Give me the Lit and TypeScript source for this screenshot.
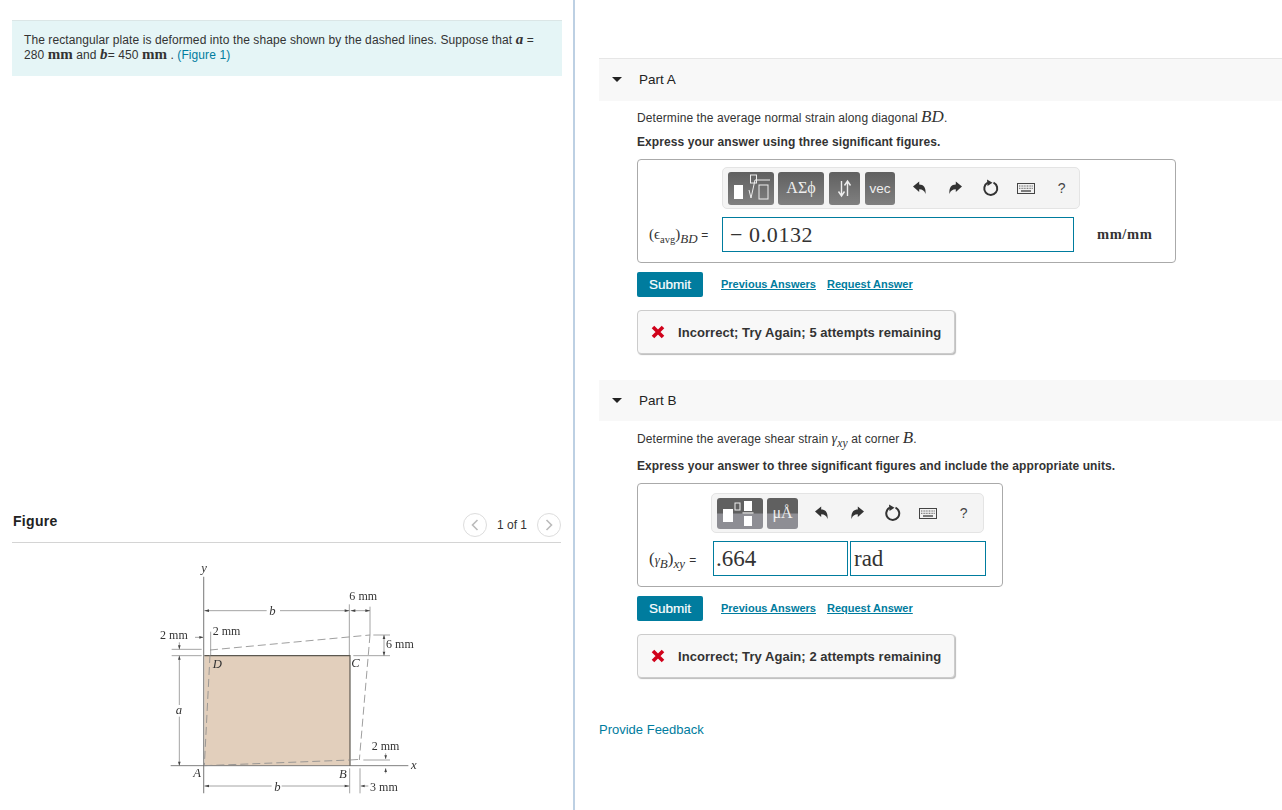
import { LitElement, html, css, svg } from 'lit';
import { customElement } from 'lit/decorators.js';

const undoIcon = html`<svg class="ic" viewBox="0 0 16 16"><path d="M1 6.500 7.200 1.500v3c4.300 0 7 3 6.300 9.500-1-3.200-3-4.700-6.300-4.700v2.700z"/></svg>`;
const redoIcon = html`<svg class="ic flip" viewBox="0 0 16 16"><path d="M1 6.500 7.200 1.500v3c4.300 0 7 3 6.300 9.500-1-3.200-3-4.700-6.300-4.700v2.700z"/></svg>`;
const resetIcon = html`<svg class="ic big" viewBox="0 0 18 18"><path d="M11.500 3.600A6.500 6.500 0 1 1 5.800 3.700" fill="none" stroke="#333" stroke-width="2"/><path d="M5 0.500 10.500 3.800 5.500 7z"/></svg>`;
const keyboardIcon = html`<svg class="kb" viewBox="0 0 18 11">
  <rect x=".5" y=".5" width="17" height="10" fill="#f2f2f2" stroke="#444"/>
  <path d="M2 3h14M2 5.300h14" stroke="#666" stroke-width="1" stroke-dasharray="1 .6"/>
  <path d="M4 8h10" stroke="#555" stroke-width="1.500"/>
</svg>`;

const templatesBtn = html`<span class="tb t1"><svg viewBox="0 0 46 33">
  <rect x="6" y="13" width="9" height="14" fill="#fff"/>
  <rect x="22.500" y="3" width="6" height="8" fill="none" stroke="#eee"/>
  <path d="M21 18l2 8 4-18h15" fill="none" stroke="#eee"/>
  <rect x="31" y="13" width="9" height="14" fill="none" stroke="#eee"/>
</svg></span>`;

const arrowsBtn = html`<span class="tb t3"><svg viewBox="0 0 31 33">
  <path d="M12.500 9V23M9.500 19.500 12.500 24l3-4.500M18.500 24V10M15.500 13.500 18.500 9l3 4.500" fill="none" stroke="#eee" stroke-width="1.400"/>
</svg></span>`;

const fractionBtn = html`<span class="tb t5"><svg viewBox="0 0 46 31">
  <rect x="6" y="11" width="10" height="13" fill="#fff"/>
  <rect x="18" y="5" width="5" height="7" fill="none" stroke="#eee"/>
  <rect x="27" y="3" width="8" height="10" fill="#fff"/>
  <rect x="25.500" y="14" width="11" height="2" fill="#bbb"/>
  <rect x="27" y="18" width="8" height="10" fill="#fff"/>
</svg></span>`;

function figureDiagram() {
  return html`<svg class="figure" viewBox="0 0 870 750">
    <rect x="193" y="302" width="437" height="330" fill="#e2cfbc"/>
    ${svg`
      <g fill="none" stroke="#777" stroke-width="2">
        <path d="M628 148V300M690 155V240M95 283H185M95 302H185M212 230V300M700 240H750M640 302H750M670 615H750M629 640V715M660 640V715"/>
        <path d="M193 167H380M420 167H628M632 167H690M118 262V283M118 302V450M118 485V632M165 247H190M732 240V302M737 595V612M737 640V655M193 693H395M425 693H628M685 693H662"/>
      </g>
      <g fill="#444">
        <path d="M193 167l14-4v8zM628 167l-14-4v8zM632 167l14-4v8zM690 167l-14-4v8zM118 283l-4-12h8zM118 302l-4 12h8zM118 632l-4-12h8zM190 247l-12-4v8zM732 240l-4 12h8zM732 302l-4-12h8zM737 612l-4-11h8zM737 640l-4 11h8zM193 693l14-4v8zM628 693l-14-4v8zM662 693l12-4v8z"/>
      </g>
      <path d="M191 65V715" stroke="#8a8a8a" stroke-width="3.500" fill="none"/>
      <path d="M92 632H805" stroke="#666" stroke-width="2.500" fill="none"/>
      <path d="M193 302H630V632" stroke="#5c5850" stroke-width="3.500" fill="none"/>
      <path d="M193 632 630 615M630 615 660 613M210 285 690 240M210 300 193 632M690 240 658 615" stroke="#8c8c8c" stroke-width="2.500" stroke-dasharray="24 12" fill="none"/>
      <g class="lbl">
        <text x="60" y="251">2 mm</text>
        <text x="218" y="241">2 mm</text>
        <text x="628" y="136">6 mm</text>
        <text x="738" y="279">6 mm</text>
        <text x="695" y="584">2 mm</text>
        <text x="690" y="708">3 mm</text>
      </g>
      <g class="lbl it">
        <text x="388" y="181">b</text>
        <text x="403" y="707">b</text>
        <text x="107" y="476">a</text>
        <text x="218" y="340">D</text>
        <text x="634" y="337">C</text>
        <text x="160" y="666">A</text>
        <text x="597" y="668">B</text>
        <text x="813" y="642">x</text>
        <text x="184" y="52">y</text>
      </g>
    `}
  </svg>`;
}

@customElement('app-root')
export class AppRoot extends LitElement {
  static styles = css`
    :host { display: flex; width: 1282px; height: 810px; overflow: hidden; background: #fff; color: #333; font-family: "Liberation Sans", Arial, sans-serif; font-size: 12px; letter-spacing: .09px; }
    sub { line-height: 0; }
    .left { width: 575px; height: 810px; box-sizing: border-box; border-right: 2px solid #bdd0e3; padding: 20px 12px 0; flex: none; }
    .intro { width: 550px; height: 56px; box-sizing: border-box; background: #e5f5f6; border-top: 1px solid #dbe6e6; padding: 12px 12px 0; line-height: 15px; }
    .m { font-family: "Liberation Serif", serif; font-size: 14px; line-height: 0; }
    .mb { font-family: "Liberation Serif", serif; font-weight: bold; font-size: 15px; line-height: 0; }
    .mi { font-family: "Liberation Serif", serif; font-style: italic; font-weight: bold; font-size: 15px; line-height: 0; }
    a { color: #007c9e; text-decoration: none; }
    .fig-head { margin-top: 434px; width: 549px; height: 33px; box-sizing: border-box; border-bottom: 1px solid #d4d4d4; display: flex; align-items: center; justify-content: space-between; padding-bottom: 11px; }
    .fig-head b { font-size: 14px; color: #222; letter-spacing: .3px; margin-left: 1px; }
    .pager { display: flex; align-items: center; gap: 10px; font-size: 12px; letter-spacing: 0; position: relative; top: 4px; }
    .circ { width: 24px; height: 24px; box-sizing: border-box; border: 1px solid #ddd; border-radius: 50%; display: flex; align-items: center; justify-content: center; }
    .circ svg { width: 8px; height: 12px; }
    .figure { display: block; width: 290px; height: 250px; margin: 12px 0 0 128px; filter: blur(.35px); }
    .lbl text { font-family: "Liberation Serif", serif; font-size: 36px; fill: #333; }
    .lbl.it text { font-style: italic; font-size: 38px; }

    .right { flex: 1; padding-top: 58px; min-width: 0; padding-left: 24px; }
    .part-head { height: 43px; box-sizing: border-box; background: #f8f8f8; border-top: 1px solid #e6e6e6; display: flex; align-items: center; font-size: 13.500px; letter-spacing: 0; color: #222; padding-bottom: 1px; }
    .part-head.b { height: 41px; border-top: none; margin-top: 26px; padding-bottom: 0; }
    .tri { width: 0; height: 0; border-left: 5px solid transparent; border-right: 5px solid transparent; border-top: 5px solid #222; margin: 0 17px 0 13px; }
    .body { padding-left: 38px; }
    .q { line-height: 16px; margin-top: 9px; }
    .q-b { margin-top: 10px; }
    .strong { font-weight: bold; line-height: 16px; margin-top: 8px; color: #333; }
    .strong-b { margin-top: 11px; }
    .bm { font-family: "Liberation Serif", serif; font-style: italic; font-size: 17px; line-height: 0; }
    .answer { box-sizing: border-box; height: 104px; border: 1px solid #aaa; border-radius: 4px; margin-top: 9px; padding-top: 7px; }
    .answer.a { width: 539px; }
    .answer.b { width: 366px; padding-top: 9px; }
    .toolbar { box-sizing: border-box; height: 42px; background: #f4f4f4; border: 1px solid #e4e4e4; border-radius: 5px; display: flex; align-items: center; padding-left: 5px; margin-left: 84px; width: 358px; }
    .b .toolbar { margin-left: 73px; width: 273px; height: 40px; }
    .tb { box-sizing: border-box; height: 33px; border-radius: 3px; background: linear-gradient(#606060, #808080); color: #eee; display: flex; align-items: center; justify-content: center; margin-right: 4px; flex: none; letter-spacing: 0; }
    .b .tb { height: 31px; }
    .tb svg { display: block; width: 100%; height: 100%; }
    .t1 { width: 46px; }
    .t2 { width: 46px; font-family: "Liberation Serif", serif; font-size: 16px; }
    .t3 { width: 31px; margin-left: 1px; }
    .t4 { width: 30px; font-size: 13.500px; margin-left: 1px; }
    .t5 { width: 46px; background: linear-gradient(#606060 49%, #8e8e94 51%); }
    .t6 { width: 31px; background: linear-gradient(#606060 49%, #8e8e94 51%); font-family: "Liberation Serif", serif; font-size: 16px; }
    .tools { display: flex; align-items: center; padding-left: 3px; color: #444; font-size: 14px; letter-spacing: 0; }
    .b .tools { padding-left: 2px; }
    .tool { width: 35.500px; display: flex; justify-content: center; flex: none; }
    .ic { width: 16px; height: 16px; fill: #333; display: block; }
    .ic.big { width: 18px; height: 18px; }
    .ic.flip { transform: scaleX(-1); }
    .kb { width: 18px; height: 11px; display: block; }
    .ans-row { display: flex; align-items: center; margin-top: 8px; }
    .lab { width: 84px; box-sizing: border-box; padding-left: 11px; font-family: "Liberation Serif", serif; font-size: 15px; letter-spacing: 0; white-space: nowrap; flex: none; }
    .b .lab { width: 75px; font-size: 17px; }
    .lab i { font-size: 13px; }
    .lab sub { font-size: 10.500px; }
    .lab .eq { font-family: "Liberation Sans", sans-serif; font-size: 12px; }
    .field { box-sizing: border-box; border: 1px solid #007c9e; background: #fff; height: 35px; display: flex; align-items: center; font-family: "Liberation Serif", serif; font-size: 22px; letter-spacing: 0; color: #333; padding-left: 7px; }
    .f1 { width: 352px; letter-spacing: .6px; }
    .f2 { width: 135px; padding-left: 2px; margin-right: 2px; font-size: 23px; }
    .f3 { width: 136px; padding-left: 3px; font-size: 23px; }
    .unit { font-family: "Liberation Serif", serif; font-weight: bold; font-size: 14.500px; letter-spacing: .6px; margin-left: 23px; color: #333; }
    .actions { display: flex; align-items: center; margin-top: 9px; }
    .submit { box-sizing: border-box; width: 66px; height: 25px; background: #007c9e; color: #fff; border-radius: 2px; font-size: 13.500px; letter-spacing: 0; display: flex; align-items: center; justify-content: center; -webkit-text-stroke: .2px #fff; }
    .actions a { font-size: 11px; font-weight: bold; letter-spacing: 0; text-decoration: underline; margin-left: 11px; margin-bottom: 2px; }
    .actions a:first-of-type { margin-left: 18px; }
    .fb { box-sizing: border-box; width: 318px; height: 44px; margin-top: 13px; background: #f8f8f8; border: 1px solid #ccc; border-radius: 4px; box-shadow: 1px 1px 1px #bbb; display: flex; align-items: center; padding-left: 13px; gap: 13px; font-size: 13px; font-weight: bold; letter-spacing: .05px; color: #333; }
    .fb svg { width: 14px; height: 14px; display: block; }
    .provide { display: block; margin-top: 44px; font-size: 13px; letter-spacing: 0; line-height: 16px; }
  `;

  private renderFeedback(left: number) {
    return html`<div class="fb">
      <svg viewBox="0 0 14 14"><path d="M2 2 12 12M12 2 2 12" stroke="#d0021b" stroke-width="3.600" fill="none"/></svg>
      <span>Incorrect; Try Again; ${left} attempts remaining</span>
    </div>`;
  }

  private renderActions() {
    return html`<div class="actions">
      <span class="submit">Submit</span>
      <a href="#">Previous Answers</a>
      <a href="#">Request Answer</a>
    </div>`;
  }

  private renderTools() {
    return html`<div class="tools">
      <span class="tool">${undoIcon}</span>
      <span class="tool">${redoIcon}</span>
      <span class="tool">${resetIcon}</span>
      <span class="tool">${keyboardIcon}</span>
      <span class="tool">?</span>
    </div>`;
  }

  render() {
    return html`
      <section class="left">
        <div class="intro">
          The rectangular plate is deformed into the shape shown by the dashed lines. Suppose that <span class="mi">a</span> =<br />
          280 <span class="mb">mm</span> and <span class="mi">b</span>= 450 <span class="mb">mm</span> . <a href="#">(Figure 1)</a>
        </div>
        <div class="fig-head">
          <b>Figure</b>
          <div class="pager">
            <span class="circ"><svg viewBox="0 0 8 12"><path d="M6.500 1 1.500 6l5 5" fill="none" stroke="#bbb" stroke-width="1.600"/></svg></span>
            <span>1 of 1</span>
            <span class="circ"><svg viewBox="0 0 8 12"><path d="M1.500 1 6.500 6l-5 5" fill="none" stroke="#bbb" stroke-width="1.600"/></svg></span>
          </div>
        </div>
        ${figureDiagram()}
      </section>

      <section class="right">
        <div class="part-head"><span class="tri"></span>Part A</div>
        <div class="body">
          <div class="q">Determine the average normal strain along diagonal <span class="bm">BD</span>.</div>
          <div class="strong">Express your answer using three significant figures.</div>
          <div class="answer a">
            <div class="toolbar">
              ${templatesBtn}
              <span class="tb t2">ΑΣϕ</span>
              ${arrowsBtn}
              <span class="tb t4">vec</span>
              ${this.renderTools()}
            </div>
            <div class="ans-row">
              <span class="lab">(ϵ<sub>avg</sub>)<sub><i>BD</i></sub> <span class="eq">=</span></span>
              <span class="field f1">− 0.0132</span>
              <span class="unit">mm/mm</span>
            </div>
          </div>
          ${this.renderActions()}
          ${this.renderFeedback(5)}
        </div>

        <div class="part-head b"><span class="tri"></span>Part B</div>
        <div class="body">
          <div class="q q-b">Determine the average shear strain <span class="m"><i>γ</i><sub><i>xy</i></sub></span> at corner <span class="bm">B</span>.</div>
          <div class="strong strong-b">Express your answer to three significant figures and include the appropriate units.</div>
          <div class="answer b">
            <div class="toolbar">
              ${fractionBtn}
              <span class="tb t6">μÅ</span>
              ${this.renderTools()}
            </div>
            <div class="ans-row">
              <span class="lab">(<i>γ</i><sub><i>B</i></sub>)<sub><i>xy</i></sub> <span class="eq">=</span></span>
              <span class="field f2">.664</span>
              <span class="field f3">rad</span>
            </div>
          </div>
          ${this.renderActions()}
          ${this.renderFeedback(2)}
        </div>
        <a class="provide" href="#">Provide Feedback</a>
      </section>
    `;
  }
}

declare global { interface HTMLElementTagNameMap { 'app-root': AppRoot; } }
